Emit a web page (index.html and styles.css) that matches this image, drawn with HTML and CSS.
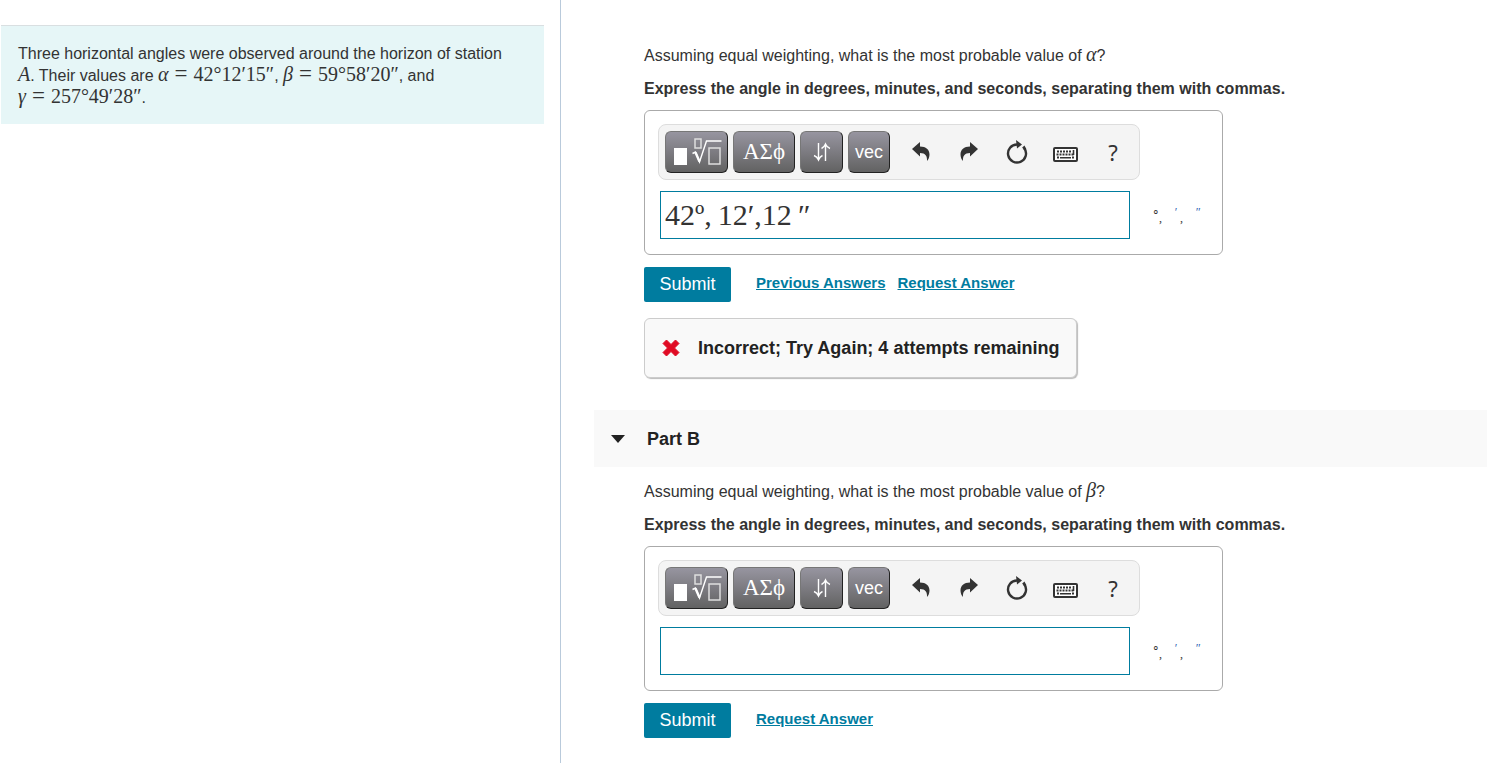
FILE: index.html
```html
<!DOCTYPE html>
<html lang="en">
  <head>
    <meta charset="UTF-8" />
    <meta name="viewport" content="width=device-width, initial-scale=1" />
    <title>Horizontal Angles</title>
    <link rel="stylesheet" href="styles.css">
  </head>
  <body>
    <!-- shared icons -->
    <svg class="sprite" aria-hidden="true">
      <symbol id="icon-root" viewBox="0 0 50 28">
        <rect x="2" y="10" width="13" height="17" fill="#fff" />
        <rect x="23" y="1" width="6" height="9" fill="none" stroke="#dedede" stroke-width="1.5" />
        <path d="M20.500 15.500l3-1.500 4 10 7-21h15" fill="none" stroke="#fff" stroke-width="1.4" />
        <path d="M23.500 14.500l4 9" fill="none" stroke="#fff" stroke-width="2.4" />
        <rect x="37" y="10" width="11" height="16" fill="none" stroke="#dedede" stroke-width="1.5" />
      </symbol>
      <symbol id="icon-arrows" viewBox="0 0 18 20">
        <path d="M5.500 1v17M1 13.500q3 1 4.500 4.500 1.500-3.500 4-4.500M12.500 19V2M8.500 6.500q2.500-1 4-4.500 1.500 3.500 4.500 4.500" fill="none" stroke="#fff" stroke-width="1.4" />
      </symbol>
      <symbol id="icon-undo" viewBox="0 0 18 20">
        <path d="M0 7l8-7v4.500c6 0 9.500 3 9.500 8 0 2.500-1 5-2.500 6.500.3-5-1.500-8-7-8V14.500z" fill="#333" />
      </symbol>
      <symbol id="icon-redo" viewBox="0 0 18 20">
        <path d="M18 7l-8-7v4.500c-6 0-9.500 3-9.500 8 0 2.500 1 5 2.500 6.500-.3-5 1.500-8 7-8V14.500z" fill="#333" />
      </symbol>
      <symbol id="icon-reset" viewBox="0 0 22 24">
        <path d="M11 4.500a9 9 0 1 0 7.500 4" fill="none" stroke="#333" stroke-width="2.400" />
        <path d="M10 0l6 4.500-5 4z" fill="#333" />
        <path d="M16.200 7.500l2.300-2 1.800 3.500-2.300 1z" fill="#333" />
      </symbol>
      <symbol id="icon-keyboard" viewBox="0 0 25 15">
        <rect x="1" y="1" width="23" height="13" rx="1" fill="#fff" stroke="#333" stroke-width="2" />
        <path d="M4 4.500h14M3.500 7.500h18M4 10.500h2M19 10.500h2" stroke="#333" stroke-width="1.800" stroke-dasharray="2 1" />
        <path d="M7 10.700h11M20.500 3v5" stroke="#333" stroke-width="1.600" />
      </symbol>
      <symbol id="icon-wrong" viewBox="0 0 18 18">
        <path d="M4.500 1L9 5.500 13.500 1 17 4.500 12.500 9l4.500 4.500-3.500 3.500L9 12.500 4.500 17 1 13.500 5.500 9 1 4.500z" fill="#e00b24" stroke="#e00b24" stroke-linejoin="round" />
      </symbol>
    </svg>

    <div class="layout">
      <aside class="intro">
        <div class="problem">
          Three horizontal angles were observed around the horizon of station
          <span class="math"><i>A</i></span>. Their values are <span class="math"><i>α</i> <span class="eq">=</span> 42°12′15″</span>,
          <span class="math"><i>β</i> <span class="eq">=</span> 59°58′20″</span>, and
          <span class="math"><i>γ</i> <span class="eq">=</span> 257°49′28″</span>.
        </div>
      </aside>

      <main class="parts">
        <section class="part">
          <p class="question">Assuming equal weighting, what is the most probable value of <i class="math">α</i>?</p>
          <label class="instructions" for="answerA">Express the angle in degrees, minutes, and seconds, separating them with commas.</label>
          <div class="answer">
            <div class="toolbar">
              <button type="button" class="tool tool-root" aria-label="Templates"><svg width="50" height="28"><use href="#icon-root" /></svg></button>
              <button type="button" class="tool tool-greek">ΑΣϕ</button>
              <button type="button" class="tool tool-arrows" aria-label="Arrows"><svg width="18" height="20"><use href="#icon-arrows" /></svg></button>
              <button type="button" class="tool tool-vec">vec</button>
              <div class="actions">
                <button type="button" aria-label="Undo"><svg width="18" height="20"><use href="#icon-undo" /></svg></button>
                <button type="button" aria-label="Redo"><svg width="18" height="20"><use href="#icon-redo" /></svg></button>
                <button type="button" aria-label="Reset"><svg width="22" height="24"><use href="#icon-reset" /></svg></button>
                <button type="button" aria-label="Keyboard"><svg class="keyboard" width="25" height="15"><use href="#icon-keyboard" /></svg></button>
                <button type="button">?</button>
              </div>
            </div>
            <div class="entry">
              <input type="text" id="answerA" value="42º,&thinsp;12′,12&thinsp;″" />
              <span class="units"><span class="mark degree">∘</span>,<span class="mark">′</span>,<span class="mark">″</span></span>
            </div>
          </div>
          <div class="controls">
            <button type="button" class="submit">Submit</button>
            <a href="#">Previous Answers</a>
            <a href="#">Request Answer</a>
          </div>
          <div class="feedback">
            <svg width="18" height="18"><use href="#icon-wrong" /></svg>
            Incorrect; Try Again; 4 attempts remaining
          </div>
        </section>

        <h2 class="part-title">
          <svg width="14" height="8"><path d="M0 0h14L7 8z" fill="#222" /></svg>
          Part B
        </h2>

        <section class="part">
          <p class="question">Assuming equal weighting, what is the most probable value of <i class="math">β</i>?</p>
          <label class="instructions" for="answerB">Express the angle in degrees, minutes, and seconds, separating them with commas.</label>
          <div class="answer">
            <div class="toolbar">
              <button type="button" class="tool tool-root" aria-label="Templates"><svg width="50" height="28"><use href="#icon-root" /></svg></button>
              <button type="button" class="tool tool-greek">ΑΣϕ</button>
              <button type="button" class="tool tool-arrows" aria-label="Arrows"><svg width="18" height="20"><use href="#icon-arrows" /></svg></button>
              <button type="button" class="tool tool-vec">vec</button>
              <div class="actions">
                <button type="button" aria-label="Undo"><svg width="18" height="20"><use href="#icon-undo" /></svg></button>
                <button type="button" aria-label="Redo"><svg width="18" height="20"><use href="#icon-redo" /></svg></button>
                <button type="button" aria-label="Reset"><svg width="22" height="24"><use href="#icon-reset" /></svg></button>
                <button type="button" aria-label="Keyboard"><svg class="keyboard" width="25" height="15"><use href="#icon-keyboard" /></svg></button>
                <button type="button">?</button>
              </div>
            </div>
            <div class="entry">
              <input type="text" id="answerB" />
              <span class="units"><span class="mark degree">∘</span>,<span class="mark">′</span>,<span class="mark">″</span></span>
            </div>
          </div>
          <div class="controls">
            <button type="button" class="submit">Submit</button>
            <a href="#">Request Answer</a>
          </div>
        </section>
      </main>
    </div>
  </body>
</html>
```
FILE: styles.css
```css
* {
  box-sizing: border-box;
}

body {
  margin: 0;
  font-family: "Liberation Sans", Arial, sans-serif;
  font-size: 16px;
  line-height: 22px;
  color: #333;
  background: #fff;
}

button,
input {
  font-family: inherit;
  margin: 0;
}

.sprite {
  display: none;
}

.layout {
  display: grid;
  grid-template-columns: 561px minmax(0, 1fr);
  min-height: 100vh;
}

.intro {
  padding: 25px 16px 0 1px;
  border-right: 1px solid #b9cadb;
}

.problem {
  padding: 17px 30px 15px 17px;
  background: #e6f6f7;
  border-top: 1px solid #d9dfe1;
}

.math {
  font-family: "Liberation Serif", "Times New Roman", serif;
  font-size: 20px;
  line-height: 16px;
  white-space: nowrap;
}

.eq {
  margin: 0 1px;
  font-size: 23px;
}

.parts {
  padding-left: 33px;
}

.part {
  padding: 14px 50px 0;
}

.parts > .part:first-child {
  padding-top: 45px;
}

.question {
  margin: 0 0 11px;
}

.instructions {
  display: block;
  margin-bottom: 10px;
  font-weight: bold;
}

.answer {
  max-width: 579px;
  padding: 13px 14px 15px 13px;
  border: 1px solid #aaa;
  border-radius: 6px;
}

.toolbar {
  display: flex;
  align-items: center;
  gap: 5px;
  max-width: 482px;
  height: 56px;
  padding: 6px 2px 6px 6px;
  background: #f4f4f4;
  border: 1px solid #ddd;
  border-radius: 8px;
}

.tool {
  display: flex;
  flex-shrink: 0;
  align-items: center;
  justify-content: center;
  height: 42px;
  padding: 0;
  color: #fff;
  background: linear-gradient(#9795a0, #626262);
  border: 1px solid #777;
  border-right-color: #222;
  border-bottom-color: #222;
  border-radius: 6px;
}

.tool-root {
  width: 63px;
}

.tool-greek {
  width: 62px;
  font-family: "Liberation Serif", "Times New Roman", serif;
  font-size: 23px;
}

.tool-arrows {
  width: 43px;
}

.tool-vec {
  width: 42px;
  font-size: 18px;
}

.actions {
  display: flex;
  flex: 1;
  margin-left: 2px;
}

.actions button {
  display: flex;
  align-items: center;
  justify-content: center;
  width: 48px;
  height: 42px;
  padding: 0;
  color: #333;
  background: none;
  border: 0;
  font-family: "Noto Sans", sans-serif;
  font-size: 22px;
}

.keyboard {
  margin-top: 4px;
}

.entry {
  display: flex;
  align-items: center;
  gap: 22px;
  margin-top: 11px;
  padding-left: 2px;
}

.entry input {
  width: 470px;
  min-width: 0;
  height: 48px;
  padding: 0 4px;
  border: 1px solid #007c9f;
  border-radius: 0;
  color: #333;
  background: #fff;
  font-family: "Liberation Serif", "Times New Roman", serif;
  font-size: 30px;
}

.units {
  display: flex;
  align-items: flex-end;
  font-family: "Liberation Serif", "Times New Roman", serif;
  font-size: 12px;
  line-height: 12px;
}

.mark {
  width: 6px;
  margin-left: 12px;
  padding-bottom: 6px;
  color: #2f5fb3;
  font-style: italic;
}

.degree {
  width: 7px;
  margin-left: 0;
  color: #333;
  font-style: normal;
}

.controls {
  display: flex;
  align-items: center;
  gap: 12px;
  margin-top: 12px;
}

.controls a {
  padding-bottom: 3px;
  color: #007c9f;
  font-size: 15px;
  font-weight: bold;
}

.submit {
  width: 87px;
  height: 35px;
  margin-right: 13px;
  padding: 0;
  color: #fff;
  background: #007c9f;
  border: 0;
  border-radius: 2px;
  font-size: 18px;
}

.feedback {
  display: flex;
  align-items: center;
  gap: 18px;
  width: fit-content;
  height: 60px;
  margin-top: 16px;
  padding: 0 17px;
  color: #222;
  background: #f9f9f9;
  border: 1px solid #ccc;
  border-radius: 6px;
  box-shadow: 1px 1px 1px #bbb;
  font-size: 18px;
  font-weight: bold;
}

.part-title {
  display: flex;
  align-items: center;
  gap: 22px;
  height: 57px;
  margin: 32px 0 0;
  padding: 0 17px;
  background: #f9f9f9;
  color: #222;
  font-size: 18px;
}
```
